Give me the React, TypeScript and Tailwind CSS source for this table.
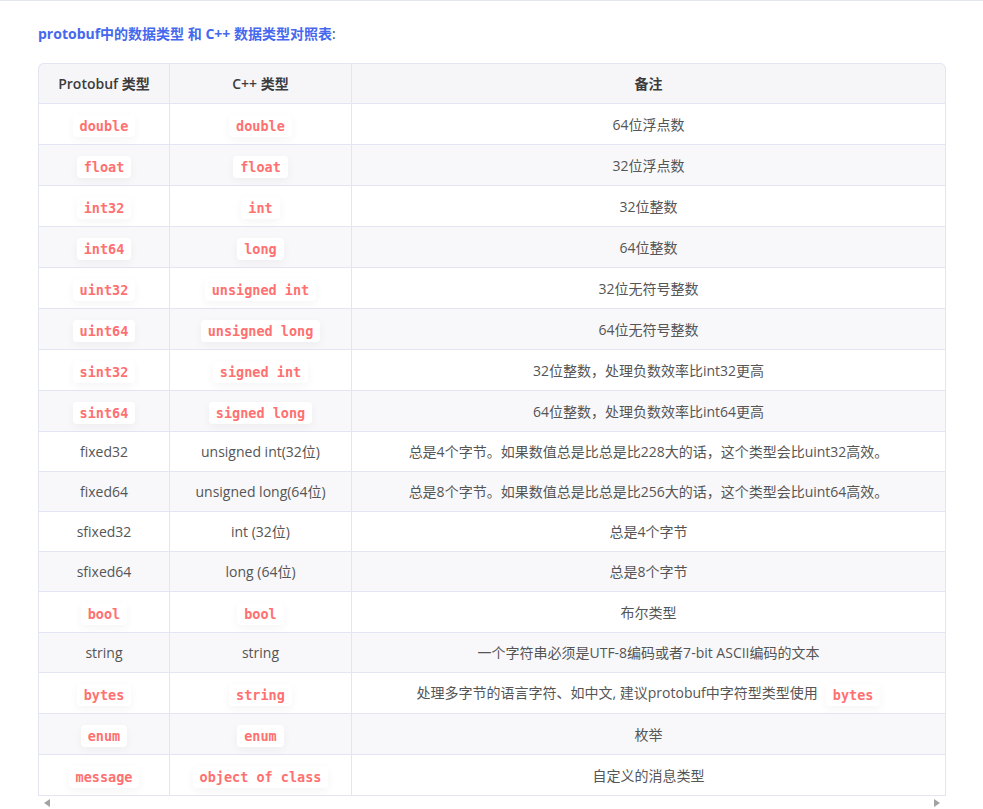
type Cell = string | { code: string };

type Row = {
  proto: Cell;
  cpp: Cell;
  note: (string | { code: string })[];
};

const rows: Row[] = [
  { proto: { code: 'double' }, cpp: { code: 'double' }, note: ['64位浮点数'] },
  { proto: { code: 'float' }, cpp: { code: 'float' }, note: ['32位浮点数'] },
  { proto: { code: 'int32' }, cpp: { code: 'int' }, note: ['32位整数'] },
  { proto: { code: 'int64' }, cpp: { code: 'long' }, note: ['64位整数'] },
  { proto: { code: 'uint32' }, cpp: { code: 'unsigned int' }, note: ['32位无符号整数'] },
  { proto: { code: 'uint64' }, cpp: { code: 'unsigned long' }, note: ['64位无符号整数'] },
  { proto: { code: 'sint32' }, cpp: { code: 'signed int' }, note: ['32位整数，处理负数效率比int32更高'] },
  { proto: { code: 'sint64' }, cpp: { code: 'signed long' }, note: ['64位整数，处理负数效率比int64更高'] },
  {
    proto: 'fixed32',
    cpp: 'unsigned int(32位)',
    note: ['总是4个字节。如果数值总是比总是比228大的话，这个类型会比uint32高效。'],
  },
  {
    proto: 'fixed64',
    cpp: 'unsigned long(64位)',
    note: ['总是8个字节。如果数值总是比总是比256大的话，这个类型会比uint64高效。'],
  },
  { proto: 'sfixed32', cpp: 'int (32位)', note: ['总是4个字节'] },
  { proto: 'sfixed64', cpp: 'long (64位)', note: ['总是8个字节'] },
  { proto: { code: 'bool' }, cpp: { code: 'bool' }, note: ['布尔类型'] },
  { proto: 'string', cpp: 'string', note: ['一个字符串必须是UTF-8编码或者7-bit ASCII编码的文本'] },
  {
    proto: { code: 'bytes' },
    cpp: { code: 'string' },
    note: ['处理多字节的语言字符、如中文, 建议protobuf中字符型类型使用', { code: 'bytes' }],
  },
  { proto: { code: 'enum' }, cpp: { code: 'enum' }, note: ['枚举'] },
  { proto: { code: 'message' }, cpp: { code: 'object of class' }, note: ['自定义的消息类型'] },
];

const Code = ({ children }: { children: string }) => (
  <code className="inline-block align-top translate-y-[2px] rounded-[4px] bg-white px-[7px] py-[4px] font-['DejaVu_Sans_Mono',monospace] text-[13.5px] font-bold leading-[14px] text-[#ff7070] shadow-[0_3px_10px_rgba(0,0,0,0.045)]">
    {children}
  </code>
);

const renderCell = (c: Cell) => (typeof c === 'string' ? c : <Code>{c.code}</Code>);

const App = () => {
  return (
    <div className="min-h-[809px] border-t border-[#e3e6ef] bg-white font-['Open_Sans','Noto_Sans_CJK_SC',sans-serif] text-[14px] text-[#555]">
      <div className="px-[38px] pt-[22px]">
        <p className="leading-[22px]">
          <span className="font-bold text-[#4568ee]">protobuf中的数据类型 和 C++ 数据类型对照表</span>
          <span className="text-[#444]">:</span>
        </p>

        <div className="mt-[18px]">
          <table className="w-[908px] border-separate border-spacing-0 text-center">
            <colgroup>
              <col className="w-[131px]" />
              <col className="w-[182px]" />
              <col />
            </colgroup>
            <thead>
              <tr className="bg-[#f6f6f9]">
                <th className="rounded-tl-[6px] border-t border-l border-b border-[#e3e6f2] py-[9px] leading-[21px] font-semibold text-[#3c3c3c]">
                  Protobuf 类型
                </th>
                <th className="border-t border-l border-b border-[#e3e6f2] py-[9px] leading-[21px] font-semibold text-[#3c3c3c]">
                  C++ 类型
                </th>
                <th className="rounded-tr-[6px] border-t border-l border-r border-b border-[#e3e6f2] py-[9px] leading-[21px] font-semibold text-[#3c3c3c]">
                  备注
                </th>
              </tr>
            </thead>
            <tbody>
              {rows.map((r, i) => (
                <tr key={i} className={i % 2 === 1 ? 'bg-[#f8f8fa]' : 'bg-white'}>
                  <td className="border-l border-b border-[#e3e6f2] px-2 py-[9px] leading-[21px]">
                    {renderCell(r.proto)}
                  </td>
                  <td className="border-l border-b border-[#e3e6f2] px-2 py-[9px] leading-[21px]">
                    {renderCell(r.cpp)}
                  </td>
                  <td className="border-l border-r border-b border-[#e3e6f2] px-2 py-[9px] leading-[21px]">
                    {r.note.map((n, j) =>
                      typeof n === 'string' ? (
                        <span key={j}>{n}</span>
                      ) : (
                        <span key={j} className="ml-[8px]">
                          <Code>{n.code}</Code>
                        </span>
                      ),
                    )}
                  </td>
                </tr>
              ))}
            </tbody>
          </table>

          {/* scrollbar arrows */}
          <div className="flex h-[14px] w-[908px] items-center justify-between px-[6px]">
            <svg width="6" height="8" viewBox="0 0 6 8">
              <path d="M6 0 L0 4 L6 8 Z" fill="#a3a3a3" />
            </svg>
            <svg width="6" height="8" viewBox="0 0 6 8">
              <path d="M0 0 L6 4 L0 8 Z" fill="#a3a3a3" />
            </svg>
          </div>
        </div>
      </div>
    </div>
  );
};

export default App;
